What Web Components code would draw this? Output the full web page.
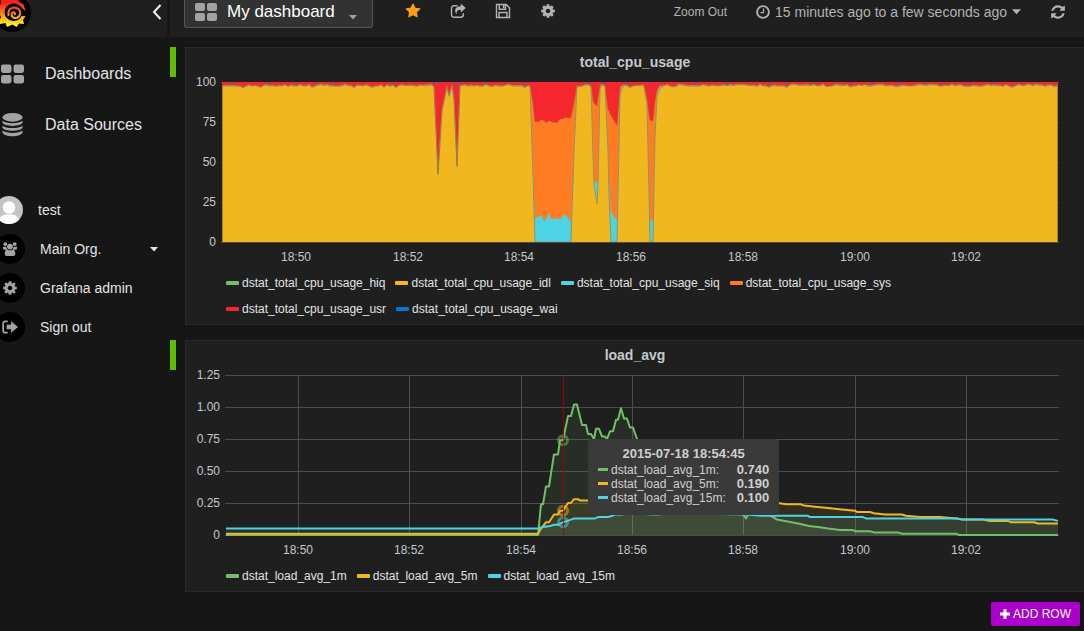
<!DOCTYPE html>
<html lang="en">
<head>
<meta charset="utf-8">
<title>My dashboard</title>
<style>
	html,
	body {
		margin: 0;
		min-height: 100%;
		background: #161616;
	}
	body {
		font-family: 'Liberation Sans', Arial, sans-serif;
		font-size: 14px;
		color: #e3e3e3;
		overflow: hidden;
	}
</style>
</head>
<body>

<dash-app>
	<side-menu slot="menu">
		<side-link icon="grid">Dashboards</side-link>
		<side-link icon="database">Data Sources</side-link>
		<side-user slot="user" icon="avatar">test</side-user>
		<side-user slot="user" icon="users" caret>Main Org.</side-user>
		<side-user slot="user" icon="cog">Grafana admin</side-user>
		<side-user slot="user" icon="signout">Sign out</side-user>
	</side-menu>
	<top-nav slot="nav">My dashboard</top-nav>
	<dash-row>
		<dash-panel title-text="total_cpu_usage">
			<cpu-chart></cpu-chart>
			<chart-legend slot="legend">
				<legend-item color="#73bf69">dstat_total_cpu_usage_hiq</legend-item>
				<legend-item color="#f2b91d">dstat_total_cpu_usage_idl</legend-item>
				<legend-item color="#4dd3e6">dstat_total_cpu_usage_siq</legend-item>
				<legend-item color="#ff7c22">dstat_total_cpu_usage_sys</legend-item>
				<legend-item color="#f6262f">dstat_total_cpu_usage_usr</legend-item>
				<legend-item color="#0a76c7">dstat_total_cpu_usage_wai</legend-item>
			</chart-legend>
		</dash-panel>
	</dash-row>
	<dash-row>
		<dash-panel title-text="load_avg">
			<load-chart></load-chart>
			<chart-legend slot="legend">
				<legend-item color="#73bf69">dstat_load_avg_1m</legend-item>
				<legend-item color="#f2b91d">dstat_load_avg_5m</legend-item>
				<legend-item color="#4dd3e6">dstat_load_avg_15m</legend-item>
			</chart-legend>
		</dash-panel>
	</dash-row>
	<add-row slot="footer">ADD ROW</add-row>
</dash-app>

<script>
const COLORS = {
	green: '#73bf69',
	yellow: '#f0b81e',
	cyan: '#4dd3e6',
	orange: '#ff7c22',
	red: '#f6262f',
	blue: '#0a76c7'
};

// name: [viewBox, markup]
const ICONS = {
	grid: [
		'0 0 22 18',
		'<rect width="10" height="8" rx="2"/><rect x="12" width="10" height="8" rx="2"/><rect y="10" width="10" height="8" rx="2"/><rect x="12" y="10" width="10" height="8" rx="2"/>'
	],
	database: [
		'0 0 22 25',
		'<ellipse cx="11" cy="4.500" rx="10.500" ry="4.500"/><path d="M.5 8.200C4 11.600 18 11.600 21.500 8.200V10C20 14.600 2 14.600.5 10zM.5 13.200C4 16.600 18 16.600 21.500 13.200V15C20 19.600 2 19.600.5 15zM.5 18.200C4 21.600 18 21.600 21.500 18.200V20C20 25.600 2 25.600.5 20z"/>'
	],
	chevron: [
		'0 0 10 16',
		'<path d="M8.500 1 2 8l6.500 7" fill="none" stroke="currentColor" stroke-width="2"/>'
	],
	caret: ['0 0 8 5', '<path d="M0 0h8L4 4.500z"/>'],
	star: [
		'0 0 1664 1792',
		'<path d="M1664 647q0 22-26 48l-363 354 86 500q1 7 1 20 0 21-10.500 35.500t-30.500 14.500q-19 0-40-12l-449-236-449 236q-22 12-40 12-21 0-31.500-14.500t-10.500-35.500q0-6 2-20l86-500-364-354q-25-27-25-48 0-37 56-46l502-73 225-455q19-41 49-41t49 41l225 455 502 73q56 9 56 46z"/>'
	],
	share: [
		'0 0 16 16',
		'<path d="M7.500 2.800H4A2.500 2.500 0 0 0 1.500 5.300v6.400A2.500 2.500 0 0 0 4 14.200h6.800a2.500 2.500 0 0 0 2.500-2.500v-1.500" fill="none" stroke="currentColor" stroke-width="1.400"/><path d="M10.800.6 15.800 5l-5 4.400V6.900C7.400 6.800 6 8.200 7 11.600 3.600 8 4.800 3.200 10.800 3.200z"/>'
	],
	save: [
		'0 0 16 16',
		'<g fill="none" stroke="currentColor" stroke-width="1.400"><path d="M1.500 1.500h9.800l3.200 3.200v9.800h-13zM4.300 1.500v4.700h6.200V1.500M4 14.500v-5h8v5"/></g><path d="M7.800 2h1.700v3H7.800z"/>'
	],
	cog: [
		'0 0 1792 1792',
		'<path d="M1152 896q0-106-75-181t-181-75-181 75-75 181 75 181 181 75 181-75 75-181zm512-109v222q0 12-8 23t-20 13l-185 28q-19 54-39 91 35 50 107 138 10 12 10 25t-9 23q-27 37-99 108t-94 71q-12 0-26-9l-138-108q-44 23-91 38-16 136-29 186-7 28-36 28h-222q-14 0-24.500-8.500t-11.500-21.500l-28-184q-49-16-90-37l-141 107q-10 9-25 9-14 0-25-11-126-114-165-168-7-10-7-23 0-12 8-23 15-21 51-66.500t54-70.500q-27-50-41-99l-183-27q-13-2-21-12.500t-8-23.500v-222q0-12 8-23t19-13l186-28q14-46 39-92-40-57-107-138-10-12-10-24 0-10 9-23 26-36 98.500-107.500t94.500-71.500q13 0 26 10l138 107q44-23 91-38 16-136 29-186 7-28 36-28h222q14 0 24.500 8.500t11.500 21.500l28 184q49 16 90 37l142-107q9-9 24-9 13 0 25 10 129 119 165 170 7 8 7 22 0 12-8 23-15 21-51 66.500t-54 70.500q26 50 41 98l183 28q13 2 21 12.500t8 23.500z"/>'
	],
	refresh: [
		'0 0 1792 1792',
		'<path d="M1639 1056q0 5-1 7-64 268-268 434.500t-478 166.500q-146 0-282.500-55t-243.500-157l-129 129q-19 19-45 19t-45-19-19-45v-448q0-26 19-45t45-19h448q26 0 45 19t19 45-19 45l-137 137q71 66 161 102t187 36q134 0 250-65t186-179q11-17 53-117 8-23 30-23h192q13 0 22.500 9.500t9.500 22.500zm25-800v448q0 26-19 45t-45 19h-448q-26 0-45-19t-19-45 19-45l138-138q-148-137-349-137-134 0-250 65t-186 179q-11 17-53 117-8 23-30 23h-199q-13 0-22.500-9.500t-9.500-22.500v-7q65-268 270-434.500t480-166.500q146 0 284 55.500t245 156.500l130-129q19-19 45-19t45 19 19 45z"/>'
	],
	clock: [
		'0 0 14 14',
		'<g fill="none" stroke="currentColor"><circle cx="7" cy="7" r="5.900" stroke-width="1.900"/><path d="M7.500 3.500V7.600H4.500" stroke-width="1.200"/></g>'
	],
	plus: ['0 0 10 10', '<path d="M3.500 0h3v3.500H10v3H6.500V10h-3V6.500H0v-3h3.500z"/>'],
	users: [
		'0 0 18 16',
		'<circle cx="3.700" cy="2.500" r="2.200"/><circle cx="14.300" cy="2.500" r="2.200"/><circle cx="9" cy="5.300" r="3.300"/><path d="M1 5.500h4a5 5 0 0 0 1.200 3.300H2.600Q1 8.800 1 7zM17 5.500h-4a5 5 0 0 1-1.200 3.300h3.600Q17 8.800 17 7zM5.800 8.500Q9 10.500 12.200 8.500 15 9 15 13.500 15 16 12.500 16h-7Q3 16 3 13.500 3 9 5.800 8.500z"/>'
	],
	signout: [
		'0 0 14 12',
		'<path d="M5 1H3Q1 1 1 3v6q0 2 2 2h2" fill="none" stroke="currentColor" stroke-width="1.500"/><path d="M4 4h4V1l6 5-6 5V8H4z"/>'
	],
	avatar: [
		'0 0 28 28',
		'<clipPath id="c"><circle cx="14" cy="14" r="14"/></clipPath><g clip-path="url(#c)"><path fill="#c4c4c4" d="M0 0h28v28H0z"/><circle cx="14" cy="11.500" r="6.300" fill="#fff"/><path fill="#fff" d="M3 28Q4 19 10.500 18.500h7Q24 19 25 28z"/></g>'
	],
	logo: [
		'0 0 32 33',
		`<defs><linearGradient id="g" x1="0" y1="0" x2="0" y2="27" gradientUnits="userSpaceOnUse"><stop offset=".1" stop-color="#f3201b"/><stop offset=".5" stop-color="#f9851c"/><stop offset=".9" stop-color="#fff01a"/></linearGradient></defs>
		<circle cx="12" cy="13" r="19" fill="#000"/>
		<path fill="url(#g)" d="M0-3H17L19 1.500 23.500 4.500 25.500 11 22.500 8.500Q19 3.500 13 3.500 5 4.500 4.500 12.500 5 20 13 21 19.500 21 21.500 16L25.500 16 23 20 24 24 19 23.500 16.500 27 12.500 24.500 7 27 5.500 23 0 24V19L1 17.500 0 15V5L1 3z"/>
		<path fill="none" stroke="url(#g)" stroke-width="2" stroke-linecap="round" d="M8.500 15Q7.500 8 14 7.500 20 8 20.300 13 19.500 18 15 18 11.500 17.500 11.500 14.500 12 12 14 12.300 15.500 13 14.800 14.300"/>`
	]
};

class BaseElement extends HTMLElement {
	constructor() {
		super();
		this.shadow = this.attachShadow({ mode: 'open' });
	}
	connectedCallback() {
		this.shadow.innerHTML = this.template();
	}
}

class AppIcon extends BaseElement {
	template() {
		const [box, markup] = ICONS[this.getAttribute('name')];
		return `
			<style>
				:host { display: block; flex: none; }
				svg { display: block; width: 100%; height: 100%; fill: currentColor; }
			</style>
			<svg viewBox="${box}" aria-hidden="true">${markup}</svg>`;
	}
}

class DashApp extends BaseElement {
	template() {
		return `
			<style>
				:host { display: flex; gap: 3px; }
				main { flex: 1; min-width: 0; display: flex; flex-direction: column; }
				.rows { display: flex; flex-direction: column; gap: 15px; padding-top: 10px; }
			</style>
			<slot name="menu"></slot>
			<main>
				<slot name="nav"></slot>
				<div class="rows"><slot></slot></div>
				<slot name="footer"></slot>
			</main>`;
	}
}

class SideMenu extends BaseElement {
	template() {
		return `
			<style>
				:host { display: block; flex: none; width: 167px; }
				header {
					display: flex;
					justify-content: space-between;
					height: 37px;
					background: #1f1f1f;
				}
				header a { display: block; }
				.logo { width: 32px; height: 33px; }
				button {
					border: 0;
					padding: 4px 5px 0 0;
					background: none;
					color: #f0f0f0;
					align-self: flex-start;
				}
				.chevron { width: 10px; height: 16px; }
				nav { padding-top: 11px; }
				.user { padding-top: 40px; }
			</style>
			<header>
				<a href="#" aria-label="Home"><app-icon class="logo" name="logo"></app-icon></a>
				<button aria-label="Collapse menu"><app-icon class="chevron" name="chevron"></app-icon></button>
			</header>
			<nav><slot></slot></nav>
			<nav class="user"><slot name="user"></slot></nav>`;
	}
}

class SideLink extends BaseElement {
	template() {
		return `
			<style>
				a {
					display: flex;
					align-items: center;
					gap: 21px;
					height: 51px;
					padding-left: 1px;
					font-size: 16px;
					color: inherit;
					text-decoration: none;
				}
				app-icon { width: 23px; height: 24px; color: #a3a3a3; }
			</style>
			<a href="#"><app-icon name="${this.getAttribute('icon')}"></app-icon><slot></slot></a>`;
	}
}

class SideUser extends BaseElement {
	template() {
		const icon = this.getAttribute('icon');
		return `
			<style>
				a {
					display: flex;
					align-items: center;
					height: 39px;
					color: inherit;
					text-decoration: none;
				}
				.crop { display: flex; justify-content: flex-end; width: 25px; margin-right: 15px; overflow: hidden; }
				.disc {
					display: flex;
					flex: none;
					align-items: center;
					justify-content: center;
					width: 30px;
					height: 30px;
					border-radius: 50%;
					background: #000;
					color: #a3a3a3;
				}
				.disc app-icon { width: 16px; height: 16px; }
				.avatar { width: 23px; }
				.avatar .disc, .avatar app-icon { width: 28px; height: 28px; }
				.caret { width: 8px; height: 5px; margin: 2px 9px 0 auto; }
			</style>
			<a href="#">
				<span class="crop ${icon}"><span class="disc"><app-icon name="${icon}"></app-icon></span></span>
				<slot></slot>
				${this.hasAttribute('caret') ? '<app-icon class="caret" name="caret"></app-icon>' : ''}
			</a>`;
	}
}

class TopNav extends BaseElement {
	template() {
		return `
			<style>
				:host {
					display: flex;
					justify-content: space-between;
					align-items: flex-start;
					height: 37px;
					padding: 0 18px 0 14px;
					box-sizing: border-box;
					background: #1f1f1f;
					color: #b3b3b3;
				}
				div { display: flex; }
				button {
					display: flex;
					align-items: center;
					height: 24px;
					padding: 0;
					border: 0;
					background: none;
					font: inherit;
					color: inherit;
				}
				.board {
					height: 28px;
					padding: 0 15px 4px 10px;
					margin-right: 32px;
					border: 1px solid #555;
					border-top: 0;
					border-radius: 0 0 3px 3px;
					background: #323232;
					font-size: 17px;
					color: #fff;
				}
				.board app-icon { width: 22px; height: 18px; color: #a3a3a3; margin-right: 10px; }
				.board .caret { width: 8px; height: 5px; margin: 11px 0 0 14px; }
				.tools { gap: 29px; }
				.tools button { height: 22px; }
				.tools app-icon { width: 16px; height: 16px; }
				.star { color: #ff9f0f; }
				.time { gap: 5px; margin: 0 29px; }
				.time .clock { width: 14px; height: 14px; }
				.time .caret { width: 9px; height: 6px; }
				.zoom { font-size: 12px; }
				.refresh app-icon { width: 16px; height: 16px; }
			</style>
			<div>
				<button class="board">
					<app-icon name="grid"></app-icon><slot></slot><app-icon class="caret" name="caret"></app-icon>
				</button>
				<div class="tools">
					<button class="star" aria-label="Star"><app-icon name="star"></app-icon></button>
					<button aria-label="Share"><app-icon name="share"></app-icon></button>
					<button aria-label="Save"><app-icon name="save"></app-icon></button>
					<button aria-label="Settings"><app-icon name="cog"></app-icon></button>
				</div>
			</div>
			<div>
				<button class="zoom">Zoom Out</button>
				<button class="time">
					<app-icon class="clock" name="clock"></app-icon>
					<span>15 minutes ago to a few seconds ago</span>
					<app-icon class="caret" name="caret"></app-icon>
				</button>
				<button class="refresh" aria-label="Refresh"><app-icon name="refresh"></app-icon></button>
			</div>`;
	}
}

class DashRow extends BaseElement {
	template() {
		return `
			<style>
				:host { display: flex; gap: 9px; align-items: flex-start; }
				button { flex: none; width: 6px; height: 30px; padding: 0; border: 0; background: #5ebd00; }
			</style>
			<button aria-label="Row menu"></button>
			<slot></slot>`;
	}
}

class DashPanel extends BaseElement {
	template() {
		return `
			<style>
				:host {
					display: block;
					flex: 1;
					min-width: 0;
					padding-bottom: 2px;
					border: 1px solid #292929;
					border-right: 0;
					background: #1f1f1f;
				}
				h2 {
					margin: 0;
					padding-bottom: 2px;
					font-size: 14px;
					line-height: 28px;
					text-align: center;
					color: #c4c8cc;
				}
			</style>
			<h2>${this.getAttribute('title-text')}</h2>
			<slot></slot>
			<slot name="legend"></slot>`;
	}
}

class ChartLegend extends BaseElement {
	template() {
		return `
			<style>
				:host { display: flex; flex-wrap: wrap; column-gap: 10px; padding: 0 40px; }
			</style>
			<slot></slot>`;
	}
}

class LegendItem extends BaseElement {
	template() {
		return `
			<style>
				:host { display: flex; align-items: center; gap: 3px; font-size: 12px; line-height: 26px; }
				i { width: 13px; height: 4px; border-radius: 1px; background: ${this.getAttribute('color')}; }
			</style>
			<i></i><slot></slot>`;
	}
}

class AddRow extends BaseElement {
	template() {
		return `
			<style>
				:host { display: flex; justify-content: flex-end; padding: 10px 4px 4px; }
				button {
					display: flex;
					align-items: center;
					gap: 3px;
					height: 24px;
					padding: 0 9px;
					border: 0;
					border-radius: 2px;
					background: #ab00cc;
					color: #fff;
					font: inherit;
					font-size: 12px;
				}
				app-icon { width: 10px; height: 10px; }
			</style>
			<button><app-icon name="plus"></app-icon><slot></slot></button>`;
	}
}

const PLOT_TOP = 4;
const PLOT_HEIGHT = 160;
const TIMES = ['18:50', '18:52', '18:54', '18:56', '18:58', '19:00', '19:02'];

const chartCss = `
	<style>
		:host { display: block; position: relative; height: 192px; }
		svg { display: block; width: 100%; height: 192px; overflow: visible; }
		text { font-size: 12px; fill: #c4c8cc; }
	</style>
`;

// Shared scales and axes. A subclass sets left, span, tick0, step, max
// and labels, and draws its series in plot().
class BaseChart extends BaseElement {
	connectedCallback() {
		this.draw();
		new ResizeObserver(() => this.draw()).observe(this);
	}
	x(t) {
		return this.left + (t / this.span) * (this.width - this.left - 26);
	}
	y(v) {
		return PLOT_TOP + PLOT_HEIGHT * (1 - v / this.max);
	}
	points(data, col = 1) {
		return data.map(d => `${this.x(d[0]).toFixed(1)},${this.y(d[col]).toFixed(1)}`).join(' ');
	}
	area(data, col) {
		return `${this.x(data[0][0])},${this.y(0)} ${this.points(data, col)} ${this.x(this.span)},${this.y(0)}`;
	}
	tickX(i) {
		return Math.round(this.x(this.tick0 + i * this.step));
	}
	draw() {
		this.width = this.clientWidth;
		const n = this.labels.length - 1;
		const yLabels = this.labels
			.map((l, i) => `<text x="${this.left - 6}" y="${PLOT_TOP + (PLOT_HEIGHT * i) / n + 4}" text-anchor="end">${l}</text>`)
			.join('');
		const xLabels = TIMES
			.map((l, i) => `<text x="${this.tickX(i)}" y="183" text-anchor="middle">${l}</text>`)
			.join('');
		this.shadow.innerHTML = `${chartCss}<svg>${this.plot()}${yLabels}${xLabels}</svg>${this.overlay()}`;
	}
	overlay() {
		return '';
	}
}

// [offset, idl, idl + siq, idl + siq + sys]
const CPU_SPIKES = [
	[
		[212, 97, 97, 97], [216, 42, 42, 43], [220, 82, 82, 83], [225, 97, 97, 98], [227, 91, 91, 92],
		[230, 98, 98, 99], [232, 89, 89, 90], [235, 47, 47, 48], [238, 98, 98, 98]
	],
	[
		[308, 97, 97, 98], [311, 42, 45, 87], [313, 0, 15, 75], [317, 0, 16, 75.5], [319, 0, 17, 76.5],
		[322, 0, 13, 76], [324, 0, 14, 74.5], [327, 0, 18, 76], [330, 0, 14, 75], [335, 0, 15, 74.5],
		[338, 0, 14, 77], [341, 0, 16.5, 77], [344, 0, 17, 78], [347, 0, 14, 77.5], [349, 0, 13, 78],
		[352, 56, 58, 87], [355, 97, 97, 98]
	],
	[
		[369, 97, 97, 98], [371, 54, 56, 89], [372, 36, 38, 87], [375, 24, 37, 85], [376, 36, 38, 90],
		[378, 96, 96, 98]
	],
	[
		[383, 97, 97, 98], [386, 57, 60, 83], [387, 29, 40, 82], [389, 0, 19, 79], [391, 0, 17, 77],
		[393, 0, 15, 75], [395, 0, 14, 73], [397, 60, 64, 88], [398, 92, 93, 97], [400, 96, 97, 98]
	],
	[
		[422, 97, 97, 98], [425, 86, 86, 90], [427, 30, 32, 80], [428, 0, 13, 76], [431, 0, 14, 76],
		[433, 65, 67, 88], [435, 91, 93, 95], [438, 96, 97, 98], [443, 98, 98, 98]
	]
];

function cpuSeries(span) {
	const rows = [];
	let t = 0;
	let seed = 7;
	const rand = () => (seed = (seed * 16807) % 2147483647) / 2147483647;
	const idle = until => {
		for (; t < until; t += 3) {
			const idl = 98.4 - rand() * 1.2 - (rand() > 0.9 ? 1 : 0);
			const siq = idl + rand() * 0.4;
			rows.push([t, idl, siq, siq + rand() * 0.5]);
		}
	};
	CPU_SPIKES.forEach(spike => {
		idle(spike[0][0]);
		rows.push(...spike);
		t = spike[spike.length - 1][0] + 2;
	});
	idle(span);
	rows.push([span, 97.5, 98, 98.5]);
	return rows;
}

class CpuChart extends BaseChart {
	constructor() {
		super();
		this.left = 36;
		this.span = 836;
		this.tick0 = 74;
		this.step = 111.7;
		this.max = 100;
		this.labels = ['100', '75', '50', '25', '0'];
		this.data = cpuSeries(this.span);
	}
	plot() {
		const [x0, x1] = [this.x(0), this.x(this.span)];
		const wai = [10, 44, 71, 92, 111, 170, 211, 232, 262, 300, 364, 380, 403, 425, 470, 505, 545, 563, 591, 628, 649, 676, 701, 720, 746, 769, 792, 811]
			.map(t => `<path d="M${this.x(t)} 4.500h${t === 211 || t === 232 ? 8 : 4}" stroke="${COLORS.blue}" stroke-opacity=".7"/>`)
			.join('');
		const ticks = [0, 1, 2, 3]
			.map(i => `<path d="M${x0 - 1} ${PLOT_TOP + 40 * i + 0.5}H${x1 + 1}" stroke="#4c4c4c"/>`)
			.join('');
		return `
			${ticks}
			<rect x="${x0}" y="${PLOT_TOP}" width="${x1 - x0}" height="${PLOT_HEIGHT}" fill="${COLORS.red}"/>
			<polygon points="${this.area(this.data, 3)}" fill="${COLORS.orange}"/>
			<polygon points="${this.area(this.data, 2)}" fill="${COLORS.cyan}"/>
			<polygon points="${this.area(this.data, 1)}" fill="${COLORS.yellow}"/>
			<polyline points="${this.points(this.data, 1)}" fill="none" stroke="#8f9468"/>
			<polyline points="${this.points(this.data, 3)}" fill="none" stroke="#b5601f" stroke-opacity=".5"/>
			${wai}
			<path d="M${x0 + 0.5} 8V164M${x1 - 0.5} 8V164" stroke="#a8821b"/>
			<path d="M${x0 - 1} 164.500H${x1 + 1}" stroke="#4c4c4c"/>`;
	}
}

const LOAD_1M = [
	[0, 0], [312, 0], [315, 0.24], [317, 0.24], [320, 0.38], [323, 0.38], [328, 0.63], [332, 0.63],
	[334, 0.74], [337, 0.74], [342, 0.93], [345, 0.93], [348, 1.02], [351, 1.02], [356, 0.86],
	[360, 0.86], [362, 0.79], [365, 0.79], [368, 0.75], [370, 0.83], [373, 0.83], [376, 0.77],
	[379, 0.77], [381, 0.75], [384, 0.81], [387, 0.81], [390, 0.9], [392, 0.9], [395, 0.99],
	[398, 0.91], [401, 0.91], [404, 0.84], [407, 0.84], [411, 0.75], [440, 0.5], [470, 0.3],
	[500, 0.2], [517, 0.16], [520, 0.13], [523, 0.17], [540, 0.17], [547, 0.14], [551, 0.12],
	[559, 0.11], [572, 0.09], [583, 0.07], [594, 0.06], [602, 0.05], [614, 0.04], [626, 0.04],
	[630, 0.03], [644, 0.03], [648, 0.02], [672, 0.02], [676, 0.01], [730, 0.01], [733, 0], [832, 0]
];
const LOAD_5M = [
	[0, 0.01], [312, 0.01], [315, 0.05], [320, 0.1], [323, 0.1], [328, 0.16], [332, 0.16],
	[334, 0.19], [337, 0.19], [342, 0.25], [345, 0.25], [348, 0.28], [352, 0.28], [354, 0.27],
	[362, 0.27], [480, 0.27], [552, 0.25], [560, 0.24], [575, 0.24], [578, 0.23], [589, 0.22],
	[602, 0.21], [616, 0.2], [629, 0.19], [631, 0.18], [644, 0.18], [648, 0.17], [659, 0.16],
	[676, 0.16], [680, 0.15], [694, 0.14], [714, 0.14], [731, 0.13], [737, 0.12], [757, 0.12],
	[764, 0.11], [782, 0.11], [785, 0.1], [808, 0.1], [812, 0.09], [832, 0.09]
];
const LOAD_15M = [
	[0, 0.05], [312, 0.05], [315, 0.06], [324, 0.07], [328, 0.08], [332, 0.08], [337, 0.1],
	[345, 0.12], [348, 0.13], [369, 0.13], [372, 0.14], [382, 0.14], [386, 0.15], [389, 0.16],
	[396, 0.16], [400, 0.17], [430, 0.16], [450, 0.17], [520, 0.16], [535, 0.15], [582, 0.15],
	[584, 0.14], [637, 0.14], [640, 0.13], [731, 0.13], [736, 0.12], [827, 0.12], [832, 0.11]
];
const HOVER = 337;

class LoadChart extends BaseChart {
	constructor() {
		super();
		this.left = 40;
		this.span = 832;
		this.tick0 = 72;
		this.step = 111.3;
		this.max = 1.25;
		this.labels = ['1.25', '1.00', '0.75', '0.50', '0.25', '0'];
	}
	plot() {
		const [x0, x1] = [this.x(0), this.x(this.span)];
		const rows = this.labels.map((l, i) => `M${x0 - 1} ${PLOT_TOP + 32 * i + 0.5}H${x1 + 1}`).join('');
		const cols = TIMES.map((l, i) => `M${this.tickX(i) + 0.5} ${PLOT_TOP}v${PLOT_HEIGHT}`).join('');
		const series = [[LOAD_1M, COLORS.green], [LOAD_5M, COLORS.yellow], [LOAD_15M, COLORS.cyan]];
		const areas = series
			.map(([data, color]) => `<polygon points="${this.area(data)}" fill="${color}" fill-opacity=".1"/>`)
			.join('');
		const lines = series
			.map(([data, color]) => `<polyline points="${this.points(data)}" fill="none" stroke="${color}" stroke-width="2" stroke-linejoin="round"/>`)
			.join('');
		const dots = [[0.74, COLORS.green], [0.19, COLORS.yellow], [0.1, COLORS.cyan]]
			.map(([v, color]) => `<circle cx="${this.x(HOVER)}" cy="${this.y(v)}" r="4.500" fill="none" stroke="${color}" stroke-opacity=".5" stroke-width="3"/>`)
			.join('');
		return `
			<path d="${rows}${cols}" stroke="#4c4c4c"/>
			${areas}${lines}
			${dots}
			<path d="M${Math.round(this.x(HOVER)) + 0.5} ${PLOT_TOP}v${PLOT_HEIGHT}" stroke="#aa0000" stroke-opacity=".8"/>`;
	}
	overlay() {
		return `<chart-tip style="left: ${Math.round(this.x(HOVER)) + 25}px"></chart-tip>`;
	}
}

class ChartTip extends BaseElement {
	template() {
		const row = ([name, value, color]) =>
			`<tr><th scope="row"><i style="background: ${color}"></i>${name}:</th><td>${value}</td></tr>`;
		return `
			<style>
				:host {
					position: absolute;
					top: 68px;
					padding: 5px 10px 10px;
					border-radius: 4px;
					background: #3a3a3a;
					color: #d0d0d0;
					font-size: 12px;
				}
				table { border-collapse: collapse; }
				caption { font-size: 13px; font-weight: bold; line-height: 19px; }
				th, td { padding: 0; line-height: 14px; white-space: nowrap; }
				th { font-weight: normal; text-align: left; }
				td { padding-left: 11px; font-size: 13px; font-weight: bold; text-align: right; }
				i { display: inline-block; width: 10px; height: 3px; margin-right: 3px; vertical-align: 3px; }
			</style>
			<table>
				<caption>2015-07-18 18:54:45</caption>
				${[
					['dstat_load_avg_1m', '0.740', COLORS.green],
					['dstat_load_avg_5m', '0.190', COLORS.yellow],
					['dstat_load_avg_15m', '0.100', COLORS.cyan]
				].map(row).join('')}
			</table>`;
	}
}

customElements.define('app-icon', AppIcon);
customElements.define('dash-app', DashApp);
customElements.define('side-menu', SideMenu);
customElements.define('side-link', SideLink);
customElements.define('side-user', SideUser);
customElements.define('top-nav', TopNav);
customElements.define('dash-row', DashRow);
customElements.define('dash-panel', DashPanel);
customElements.define('chart-legend', ChartLegend);
customElements.define('legend-item', LegendItem);
customElements.define('add-row', AddRow);
customElements.define('chart-tip', ChartTip);
customElements.define('cpu-chart', CpuChart);
customElements.define('load-chart', LoadChart);
</script>
</body>
</html>
